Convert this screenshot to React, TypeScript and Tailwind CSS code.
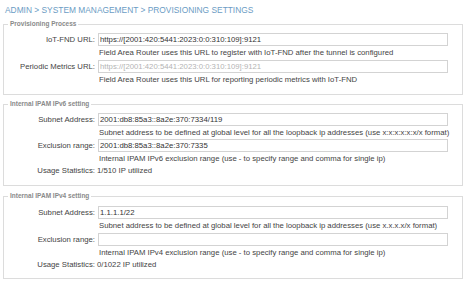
import React from "react";

type Field = {
  label: string;
  value?: string;
  help?: string;
  helpH?: string;
  disabled?: boolean;
  text?: string;
};

const sections: { title: string; fields: Field[]; cls: string }[] = [
  {
    title: "Provisioning Process",
    cls: "pt-[4px] pb-[7px]",
    fields: [
      {
        label: "IoT-FND URL:",
        value: "https://[2001:420:5441:2023:0:0:310:109]:9121",
        help: "Field Area Router uses this URL to register with IoT-FND after the tunnel is configured",
      },
      {
        label: "Periodic Metrics URL:",
        value: "https://[2001:420:5441:2023:0:0:310:109]:9121",
        help: "Field Area Router uses this URL for reporting periodic metrics with IoT-FND",
        disabled: true,
      },
    ],
  },
  {
    title: "Internal IPAM IPv6 setting",
    cls: "mt-[4px] pt-[4px] pb-[9px]",
    fields: [
      {
        label: "Subnet Address:",
        value: "2001:db8:85a3::8a2e:370:7334/119",
        help: "Subnet address to be defined at global level for all the loopback ip addresses (use x:x:x:x:x:x/x format)",
        helpH: "h-[13px]",
      },
      {
        label: "Exclusion range:",
        value: "2001:db8:85a3::8a2e:370:7335",
        help: "Internal IPAM IPv6 exclusion range (use - to specify range and comma for single ip)",
        helpH: "h-[13px]",
      },
      { label: "Usage Statistics:", text: "1/510 IP utilized" },
    ],
  },
  {
    title: "Internal IPAM IPv4 setting",
    cls: "mt-[5px] pt-[5px] pb-[8px]",
    fields: [
      {
        label: "Subnet Address:",
        value: "1.1.1.1/22",
        help: "Subnet address to be defined at global level for all the loopback ip addresses (use x.x.x.x/x format)",
      },
      {
        label: "Exclusion range:",
        value: "",
        help: "Internal IPAM IPv4 exclusion range (use - to specify range and comma for single ip)",
        helpH: "h-[13px]",
      },
      { label: "Usage Statistics:", text: "0/1022 IP utilized" },
    ],
  },
];

function Row({ f }: { f: Field }) {
  if (f.text !== undefined) {
    return (
      <div className="flex h-[11px] items-center">
        <div className="w-[91px] shrink-0 text-right">{f.label}</div>
        <div className="ml-[2px]">{f.text}</div>
      </div>
    );
  }
  return (
    <>
      <div className="flex h-[13px] items-center">
        <div className="w-[91px] shrink-0 text-right">{f.label}</div>
        <input
          readOnly
          disabled={f.disabled}
          value={f.value}
          className={
            "ml-[3px] h-[13px] w-[350px] border border-[#d3d3d3] bg-white pl-[1px] text-[7.75px] outline-none " +
            (f.disabled ? "text-[#b4b4b4]" : "text-[#333]")
          }
        />
      </div>
      <div className={"flex items-center pl-[95px] text-[#444] " + (f.helpH ?? "h-[14px]")}>
        {f.help}
      </div>
    </>
  );
}

export default function App() {
  return (
    <div
      className="h-[283px] w-[474px] overflow-hidden bg-white pl-[3px] pr-[11px] text-[7.75px] leading-[10px] text-[#444]"
      style={{ fontFamily: '"Liberation Sans", Arial, sans-serif' }}
    >
      <div className="flex h-[19px] items-center pl-[2px] pt-[1px] text-[8.4px] text-[#6b9cc4]">
        ADMIN &gt; SYSTEM MANAGEMENT &gt; PROVISIONING SETTINGS
      </div>
      <div className="flex flex-col">
        {sections.map((s) => (
          <fieldset key={s.title} className={"border border-[#dcdcdc] " + s.cls}>
            <legend className="ml-[4px] h-[10px] px-[2px] text-[6.5px] font-bold leading-[10px] text-[#8a8a8a]">
              {s.title}
            </legend>
            {s.fields.map((f) => (
              <Row key={f.label} f={f} />
            ))}
          </fieldset>
        ))}
      </div>
    </div>
  );
}
